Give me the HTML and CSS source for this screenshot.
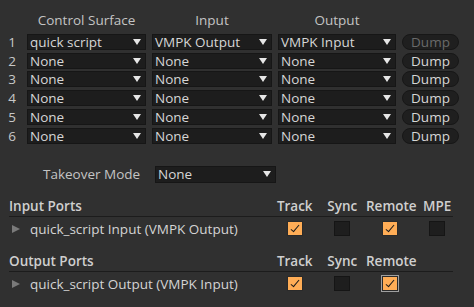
FILE: index.html
```html
<!DOCTYPE html>
<html>
<head>
<meta charset="utf-8">
<link rel="stylesheet" href="styles.css">
</head>
<body>
<div class="page">
  <div class="surfaces">
    <div></div>
    <div class="colhead">Control Surface</div>
    <div class="colhead">Input</div>
    <div class="colhead">Output</div>
    <div></div>

    <div class="num">1</div>
    <div class="select">quick script</div>
    <div class="select">VMPK Output</div>
    <div class="select">VMPK Input</div>
    <div class="dump disabled">Dump</div>

    <div class="num">2</div>
    <div class="select">None</div>
    <div class="select">None</div>
    <div class="select">None</div>
    <div class="dump">Dump</div>

    <div class="num">3</div>
    <div class="select">None</div>
    <div class="select">None</div>
    <div class="select">None</div>
    <div class="dump">Dump</div>

    <div class="num">4</div>
    <div class="select">None</div>
    <div class="select">None</div>
    <div class="select">None</div>
    <div class="dump">Dump</div>

    <div class="num">5</div>
    <div class="select">None</div>
    <div class="select">None</div>
    <div class="select">None</div>
    <div class="dump">Dump</div>

    <div class="num">6</div>
    <div class="select">None</div>
    <div class="select">None</div>
    <div class="select">None</div>
    <div class="dump">Dump</div>
  </div>

  <div class="takeover">
    <div class="takeover-label">Takeover Mode</div>
    <div class="select takeover-select">None</div>
  </div>

  <div class="ports">
    <div class="ports-head">
      <div class="section-title">Input Ports</div>
      <div class="opt">Track</div>
      <div class="opt">Sync</div>
      <div class="opt">Remote</div>
      <div class="opt">MPE</div>
    </div>
    <div class="rule"></div>
    <div class="ports-row">
      <div class="port-name"><span class="expander"></span>quick_script Input (VMPK Output)</div>
      <div class="cell"><span class="check on"></span></div>
      <div class="cell"><span class="check"></span></div>
      <div class="cell"><span class="check on"></span></div>
      <div class="cell"><span class="check"></span></div>
    </div>
  </div>

  <div class="ports out">
    <div class="ports-head">
      <div class="section-title">Output Ports</div>
      <div class="opt">Track</div>
      <div class="opt">Sync</div>
      <div class="opt">Remote</div>
      <div class="opt"></div>
    </div>
    <div class="rule"></div>
    <div class="ports-row">
      <div class="port-name"><span class="expander"></span>quick_script Output (VMPK Input)</div>
      <div class="cell"><span class="check on"></span></div>
      <div class="cell"><span class="check"></span></div>
      <div class="cell"><span class="check on focus"></span></div>
      <div class="cell"></div>
    </div>
  </div>
</div>
</body>
</html>
```
FILE: styles.css
```css
html, body {
  margin: 0;
  padding: 0;
  background: #303030;
}
body {
  width: 474px;
  height: 307px;
  overflow: hidden;
  font-family: "Open Sans", "Liberation Sans", Arial, sans-serif;
  font-size: 13.5px;
  font-weight: 500;
  color: #d2d2d2;
}
.page {
  padding-top: 12px;
}
.surfaces {
  display: grid;
  grid-template-columns: 21px 119px 120px 118px 57px;
  grid-template-rows: 19px repeat(6, 16px);
  column-gap: 6px;
  row-gap: 2.75px;
}
.colhead {
  text-align: center;
  color: #c4c4c4;
  line-height: 16px;
}
.num {
  text-align: center;
  padding-left: 3px;
  line-height: 16px;
  color: #c8c8c8;
}
.select {
  position: relative;
  box-sizing: border-box;
  height: 16px;
  line-height: 14px;
  background: #1d1d1d;
  border: 1px solid #161616;
  padding-left: 2px;
  color: #d6d6d6;
  white-space: nowrap;
}
.select::after {
  content: "";
  position: absolute;
  right: 4px;
  top: 4px;
  border-left: 4px solid transparent;
  border-right: 4px solid transparent;
  border-top: 6px solid #e6e6e6;
}
.dump {
  box-sizing: border-box;
  height: 16px;
  line-height: 14px;
  border-radius: 8px;
  background: #1f1f1f;
  border: 1px solid #171717;
  text-align: center;
  color: #d6d6d6;
}
.dump.disabled {
  color: #6a6a6a;
}
.takeover {
  display: flex;
  align-items: center;
  margin-top: 22.5px;
  height: 16.5px;
}
.takeover-label {
  width: 155px;
  box-sizing: border-box;
  padding-left: 43px;
  color: #c4c4c4;
}
.takeover-select {
  width: 121px;
  height: 16.5px;
  line-height: 14.5px;
}
.ports {
  margin-left: 9px;
  margin-top: 15px;
  width: 452px;
}
.ports.out {
  margin-top: 12px;
}
.ports-head, .ports-row {
  display: grid;
  grid-template-columns: 1fr 47.5px 47.5px 47.5px 47.5px;
  align-items: center;
}
.ports-head {
  height: 16px;
  line-height: 16px;
}
.section-title {
  font-weight: 600;
  color: #cfcfcf;
}
.opt {
  text-align: center;
  font-weight: 600;
  color: #cfcfcf;
}
.rule {
  height: 1px;
  background: #1c1c1c;
  margin-top: 2px;
  margin-right: 8px;
}
.ports-row {
  height: 24px;
}
.port-name {
  display: flex;
  align-items: center;
  color: #d4d4d4;
  white-space: nowrap;
}
.expander {
  width: 0;
  height: 0;
  border-top: 4.5px solid transparent;
  border-bottom: 4.5px solid transparent;
  border-left: 8px solid #7a7a7a;
  margin-left: 3px;
  margin-right: 10px;
}
.cell {
  display: flex;
  justify-content: center;
}
.check {
  position: relative;
  box-sizing: border-box;
  width: 16px;
  height: 15px;
  background: #1e1e1e;
  border: 1px solid #151515;
}
.check.on {
  background: #ffad56;
  border-color: #2a2a2a;
}
.check.on::after {
  content: "";
  position: absolute;
  left: 5px;
  top: 1px;
  width: 3px;
  height: 8px;
  border-right: 1.5px solid #1a1a1a;
  border-bottom: 1.5px solid #1a1a1a;
  transform: rotate(40deg);
}
.check.focus {
  outline: 1px solid #a0a0a0;
  outline-offset: 0;
}
```
